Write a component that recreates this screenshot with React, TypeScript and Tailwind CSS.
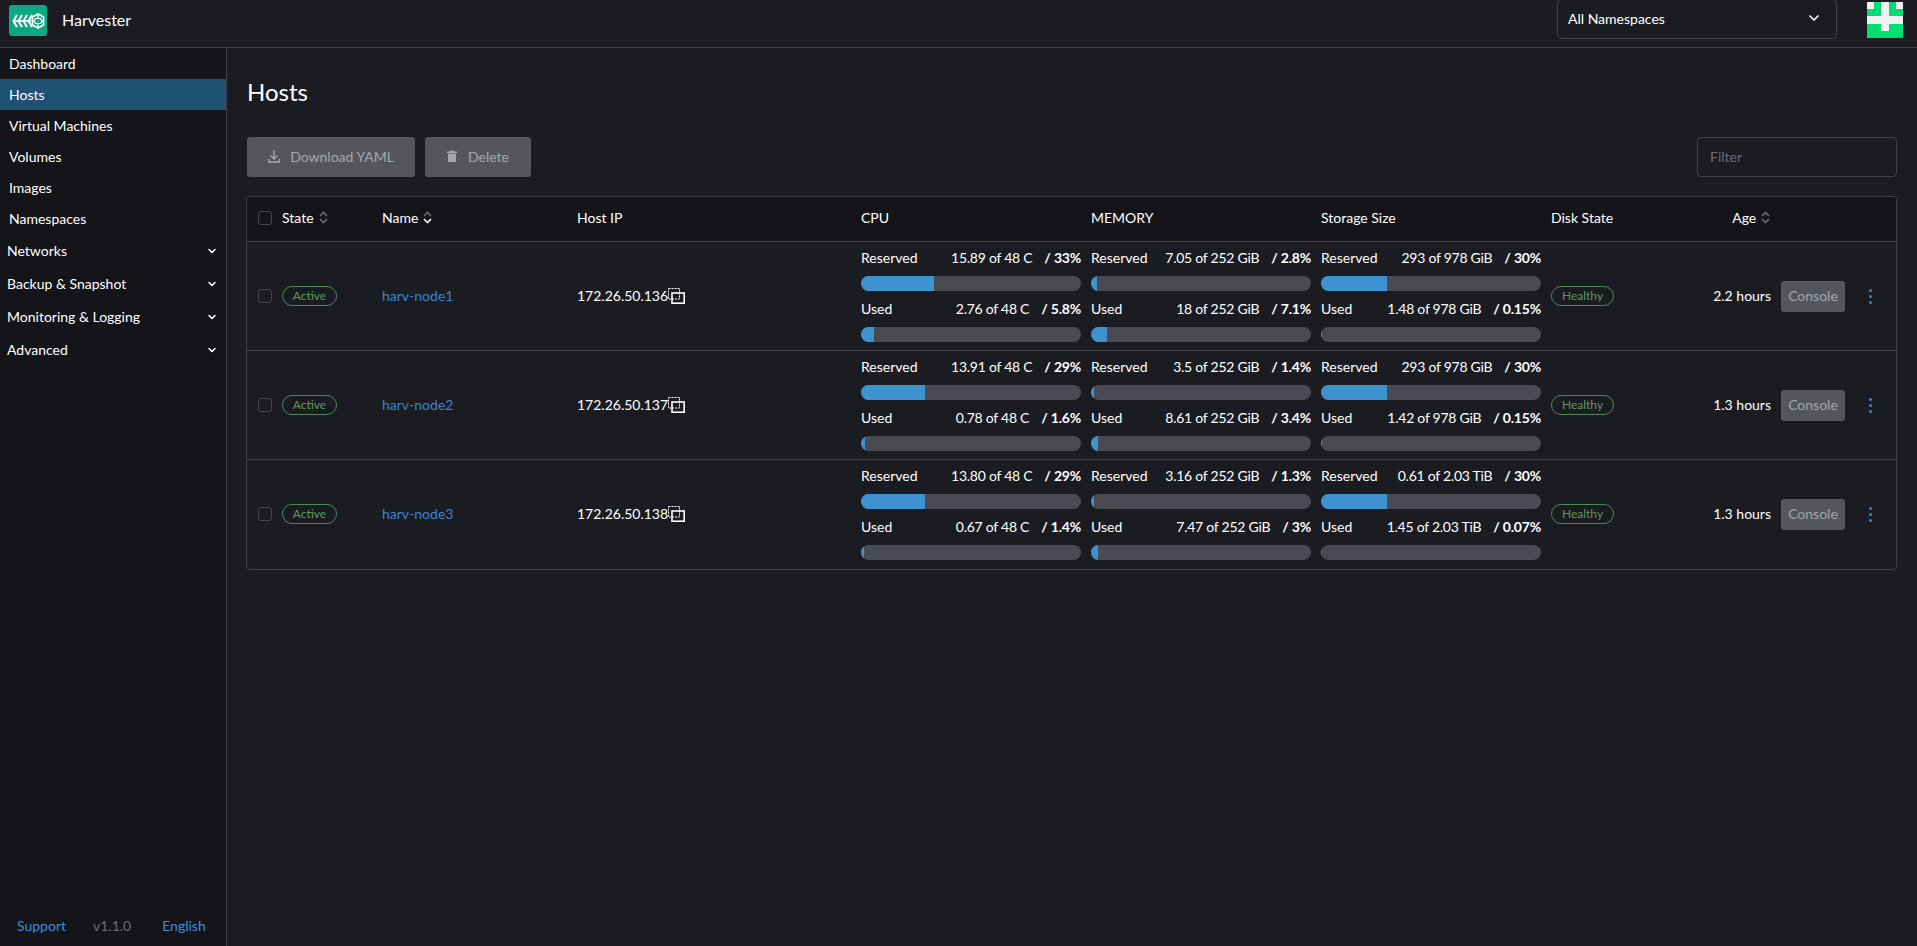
import React from 'react';
import { ChevronDown } from 'lucide-react';

type Stat = { label: string; value: string; pct: string; fill: number };
type Host = {
  name: string;
  ip: string;
  age: string;
  cpu: Stat[];
  memory: Stat[];
  storage: Stat[];
};

const hosts: Host[] = [
  {
    name: 'harv-node1',
    ip: '172.26.50.136',
    age: '2.2 hours',
    cpu: [
      { label: 'Reserved', value: '15.89 of 48 C', pct: '33%', fill: 33 },
      { label: 'Used', value: '2.76 of 48 C', pct: '5.8%', fill: 5.8 },
    ],
    memory: [
      { label: 'Reserved', value: '7.05 of 252 GiB', pct: '2.8%', fill: 2.8 },
      { label: 'Used', value: '18 of 252 GiB', pct: '7.1%', fill: 7.1 },
    ],
    storage: [
      { label: 'Reserved', value: '293 of 978 GiB', pct: '30%', fill: 30 },
      { label: 'Used', value: '1.48 of 978 GiB', pct: '0.15%', fill: 0.15 },
    ],
  },
  {
    name: 'harv-node2',
    ip: '172.26.50.137',
    age: '1.3 hours',
    cpu: [
      { label: 'Reserved', value: '13.91 of 48 C', pct: '29%', fill: 29 },
      { label: 'Used', value: '0.78 of 48 C', pct: '1.6%', fill: 1.6 },
    ],
    memory: [
      { label: 'Reserved', value: '3.5 of 252 GiB', pct: '1.4%', fill: 1.4 },
      { label: 'Used', value: '8.61 of 252 GiB', pct: '3.4%', fill: 3.4 },
    ],
    storage: [
      { label: 'Reserved', value: '293 of 978 GiB', pct: '30%', fill: 30 },
      { label: 'Used', value: '1.42 of 978 GiB', pct: '0.15%', fill: 0.15 },
    ],
  },
  {
    name: 'harv-node3',
    ip: '172.26.50.138',
    age: '1.3 hours',
    cpu: [
      { label: 'Reserved', value: '13.80 of 48 C', pct: '29%', fill: 29 },
      { label: 'Used', value: '0.67 of 48 C', pct: '1.4%', fill: 1.4 },
    ],
    memory: [
      { label: 'Reserved', value: '3.16 of 252 GiB', pct: '1.3%', fill: 1.3 },
      { label: 'Used', value: '7.47 of 252 GiB', pct: '3%', fill: 3 },
    ],
    storage: [
      { label: 'Reserved', value: '0.61 of 2.03 TiB', pct: '30%', fill: 30 },
      { label: 'Used', value: '1.45 of 2.03 TiB', pct: '0.07%', fill: 0.07 },
    ],
  },
];

const gridCols = 'grid grid-cols-[35px_100px_195px_284px_230px_230px_230px_1fr]';

function Logo() {
  return (
    <div className="w-[38px] h-[31px] rounded-[3px] bg-[#0ba882] flex items-center justify-center">
      <svg width="33" height="16" viewBox="0 0 33 16" fill="none" stroke="#fff">
        <g strokeWidth="2">
          <path d="M5 2 1.5 8 5 14M10 2 6.5 8l3.500 6M15 2l-3.500 6 3.500 6M20 2l-3.500 6 3.500 6" />
        </g>
        <path d="M2 8h17" strokeWidth="1.6" />
        <path d="M20.500 4 26 1l5.500 3v8L26 15l-5.500-3z" strokeWidth="1.7" />
        <path d="M23.500 5.500h5L30 8l-1.500 2.500h-5L22 8zM26 1v4.500M26 10.500V15M20.500 8H22M30 8h1.500" strokeWidth="1.200" />
      </svg>
    </div>
  );
}

function Avatar() {
  return (
    <svg width="36" height="36" viewBox="0 0 36 36" className="block">
      <rect width="36" height="36" fill="#00de73" />
      <rect x="0" y="0" width="7" height="7" fill="#f0f0f0" />
      <rect x="29" y="0" width="7" height="7" fill="#f0f0f0" />
      <rect x="14" y="0" width="8" height="29" fill="#f0f0f0" />
      <rect x="0" y="14" width="36" height="8" fill="#f0f0f0" />
    </svg>
  );
}

function SortIcon({ active }: { active?: boolean }) {
  return (
    <svg width="9" height="13" viewBox="0 0 9 13" fill="none" strokeWidth="1.6" className="shrink-0">
      <path d="M1 5 4.500 1.500 8 5" stroke="#6c6c76" />
      <path d="M1 8l3.500 3.500L8 8" stroke={active ? '#ffffff' : '#6c6c76'} />
    </svg>
  );
}

function CopyIcon() {
  return (
    <svg width="17" height="16" viewBox="0 0 17 16" fill="none" stroke="#fff" className="shrink-0">
      <rect x=".5" y=".5" width="11" height="10.500" strokeDasharray="2 1" />
      <rect x="4" y="5" width="12.200" height="10.200" strokeWidth="1.600" />
    </svg>
  );
}

function Checkbox() {
  return <div className="w-[14px] h-[14px] rounded-[3px] border border-[#46474e]" />;
}

function Badge({ text, width }: { text: string; width: string }) {
  return (
    <span className={`${width} h-5 pb-[1px] rounded-full border border-[#4d8a55] text-[#5d995d] text-[12px] leading-none flex items-center justify-center`}>
      {text}
    </span>
  );
}

function Meter({ stat, className }: { stat: Stat; className?: string }) {
  return (
    <div className={className}>
      <div className="h-5 pb-[2px] flex items-center justify-between text-[14px] text-white whitespace-nowrap">
        <span>{stat.label}</span>
        <span className="flex gap-[12px]">
          <span className="tracking-[-0.25px]">{stat.value}</span>
          <span className="font-bold tracking-[-0.2px]">/ {stat.pct}</span>
        </span>
      </div>
      <div className="mt-2 h-[15px] rounded-lg bg-[#4a4b52] overflow-hidden">
        <div className="h-full bg-[#3d92d0]" style={{ width: `${stat.fill}%` }} />
      </div>
    </div>
  );
}

function MeterCell({ stats }: { stats: Stat[] }) {
  return (
    <div className="w-[220px] pt-[6px]">
      <Meter stat={stats[0]} />
      <Meter stat={stats[1]} className="mt-2" />
    </div>
  );
}

function HostRow({ host }: { host: Host }) {
  return (
    <div className={`${gridCols} h-[109px] border-t border-[#3f4046]`}>
      <div className="flex items-center pl-[11px]">
        <Checkbox />
      </div>
      <div className="flex items-center">
        <Badge text="Active" width="w-[55px]" />
      </div>
      <div className="flex items-center pb-[2px]">
        <a className="text-[14px] text-[#3b82d0]">{host.name}</a>
      </div>
      <div className="flex items-center text-[14px] text-white">
        <span className="pb-[2px]">{host.ip}</span>
        <CopyIcon />
      </div>
      <MeterCell stats={host.cpu} />
      <MeterCell stats={host.memory} />
      <MeterCell stats={host.storage} />
      <div className="flex items-center">
        <Badge text="Healthy" width="w-[63px]" />
        <span className="ml-auto pb-[2px] text-[14px] text-white">{host.age}</span>
        <button className="ml-[10px] w-16 h-[31px] pb-[2px] rounded-[3px] bg-[#55565c] text-[14px] text-[#a5a5ad]">
          Console
        </button>
        <div className="ml-[24px] mr-[24px] flex flex-col gap-[3px]">
          <span className="w-[3px] h-[3px] rounded-full bg-[#3b82d0]" />
          <span className="w-[3px] h-[3px] rounded-full bg-[#3b82d0]" />
          <span className="w-[3px] h-[3px] rounded-full bg-[#3b82d0]" />
        </div>
      </div>
    </div>
  );
}

const links = ['Dashboard', 'Hosts', 'Virtual Machines', 'Volumes', 'Images', 'Namespaces'];
const groups = ['Networks', 'Backup & Snapshot', 'Monitoring & Logging', 'Advanced'];

export default function App() {
  return (
    <div className="w-[1917px] h-[946px] overflow-hidden flex flex-col bg-[#1b1c21] text-white font-['Lato',sans-serif]">
      <header className="h-[48px] shrink-0 border-b border-[#3f4046] flex items-center">
        <div className="ml-[9px] -mt-[6px]">
          <Logo />
        </div>
        <span className="ml-[15px] -mt-[7px] text-[16px]">Harvester</span>
        <div className="ml-auto self-start -mt-[1px] w-[280px] h-[40px] pb-[2px] rounded-[4px] border border-[#3f4046] flex items-center justify-between pl-[10px] pr-[14px] text-[14px]">
          <span>All Namespaces</span>
          <ChevronDown size={16} strokeWidth={2.5} />
        </div>
        <div className="ml-[30px] mr-[14px] -mt-[8px]">
          <Avatar />
        </div>
      </header>

      <div className="flex-1 flex min-h-0">
        <aside className="w-[227px] shrink-0 border-r border-[#3f4046] bg-[#141419] flex flex-col">
          <nav>
            {links.map(l => (
              <div
                key={l}
                className={`h-[31px] pl-[9px] flex items-center text-[14px] ${l === 'Hosts' ? 'bg-[#1e5172]' : ''}`}
              >
                {l}
              </div>
            ))}
          </nav>
          <div>
            {groups.map(g => (
              <div key={g} className="h-[33px] pl-[7px] pr-[8px] flex items-center justify-between text-[14px]">
                <span>{g}</span>
                <ChevronDown size={12} strokeWidth={3} />
              </div>
            ))}
          </div>
          <div className="mt-auto h-[40px] mb-[1px] pl-[17px] flex items-center text-[14px]">
            <a className="text-[#3d8fd5]">Support</a>
            <span className="ml-[27px] text-[#6c6c76]">v1.1.0</span>
            <a className="ml-[31px] text-[#3d8fd5]">English</a>
          </div>
        </aside>

        <main className="flex-1 min-w-0 pl-[19px] pr-[20px]">
          <h1 className="mt-[29px] ml-[1px] text-[24px] leading-[30px]">Hosts</h1>
          <div className="mt-[30px] flex items-center">
            <button className="w-[168px] h-[40px] ml-[1px] pb-[2px] rounded-[3px] bg-[#55565c] text-[14px] text-[#a5a5ad] flex items-center justify-center gap-[10px]">
              <svg width="12" height="13" viewBox="0 0 12 13" fill="none" stroke="#a5a5ad" strokeWidth="1.400">
                <path d="M6 0v8.500M2.500 5.500 6 9l3.500-3.500M.7 9v3h10.600V9" />
              </svg>
              Download YAML
            </button>
            <button className="w-[106px] h-[40px] ml-[10px] pb-[2px] rounded-[3px] bg-[#55565c] text-[14px] text-[#a5a5ad] flex items-center justify-center gap-[11px]">
              <svg width="10" height="12" viewBox="0 0 10 12" fill="#a5a5ad">
                <path d="M0 1.500h3.200V.5h3.600v1H10V3H0zM1 3.600h8V12H1z" />
              </svg>
              Delete
            </button>
            <input
              placeholder="Filter"
              className="ml-auto w-[200px] h-[40px] pb-[2px] rounded-[4px] border border-[#3f4046] bg-transparent px-3 text-[14px] placeholder:text-[#6c6c76] outline-none"
            />
          </div>

          <div className="mt-[19px] pb-[1px] rounded-[4px] border border-[#3f4046] overflow-hidden">
            <div className={`${gridCols} h-[44px] bg-[#141419] items-center text-[14px] text-white`}>
              <div className="pl-[11px] pb-[2px]">
                <Checkbox />
              </div>
              <div className="flex items-center gap-[5px] pb-[4px]">
                State <SortIcon />
              </div>
              <div className="flex items-center gap-[5px] pb-[4px]">
                Name <SortIcon active />
              </div>
              <div className="pb-[4px]">Host IP</div>
              <div className="pb-[4px]">CPU</div>
              <div className="pb-[4px]">MEMORY</div>
              <div className="pb-[4px]">Storage Size</div>
              <div className="flex items-center pb-[4px]">
                <span>Disk State</span>
                <span className="ml-[119px] flex items-center gap-[5px]">
                  Age <SortIcon />
                </span>
              </div>
            </div>
            {hosts.map(h => (
              <HostRow key={h.name} host={h} />
            ))}
          </div>
        </main>
      </div>
    </div>
  );
}
